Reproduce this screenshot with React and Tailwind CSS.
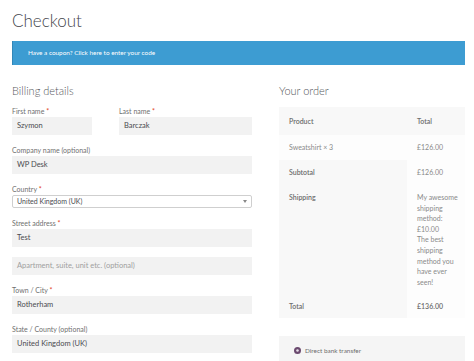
import React from 'react';

const Req = () => <span className="text-[#e2401c]">*</span>;

const Field = ({ label, required, value, placeholder }) => (
  <div className="flex flex-col">
    {label && (
      <label className="h-[10px] leading-[10px] text-[7px] text-[#707070]">
        {label}
        {required && <Req />}
      </label>
    )}
    <div
      className={`${label ? 'mt-[1px]' : ''} h-[18px] bg-[#f2f2f2] flex items-center px-[5px] text-[7.5px] ${
        value ? 'text-[#4a4b50]' : 'text-[#a0a0a0]'
      }`}
    >
      {value || placeholder}
    </div>
  </div>
);

const App = () => {
  const shipping = ['My awesome', 'shipping', 'method:', '£10.00', 'The best', 'shipping', 'method you', 'have ever', 'seen!'];

  return (
    <div className="w-[474px] h-[361px] overflow-hidden bg-white pl-[12px] pr-[9px] font-['Lato',sans-serif] text-[#43454b]">
      {/* Title */}
      <h1 className="mt-[9px] h-[24px] leading-[24px] text-[17px] font-light text-[#43454b]">Checkout</h1>

      {/* Coupon banner */}
      <div className="mt-[8px] h-[24px] bg-[#3d9cd2] border-l border-[#3287b8] flex items-center pl-[15px] text-[6.4px] text-white">
        Have a coupon? Click here to enter your code
      </div>

      <div className="mt-[18px] flex gap-[27px]">
        {/* Billing details */}
        <div className="w-[240px] flex flex-col">
          <h2 className="h-[16px] leading-[16px] text-[11px] font-light text-[#55575c]">Billing details</h2>
          <div className="mt-[7px] flex flex-col gap-[10px]">
            <div className="flex gap-[27px]">
              <div className="w-[80px]">
                <Field label="First name " required value="Szymon" />
              </div>
              <div className="flex-1">
                <Field label="Last name " required value="Barczak" />
              </div>
            </div>
            <Field label="Company name (optional)" value="WP Desk" />
            <div className="flex flex-col">
              <label className="h-[10px] leading-[10px] text-[7px] text-[#707070]">
                Country <Req />
              </label>
              <div className="mt-[1px] h-[13px] bg-white border border-[#cfcfcf] rounded-[2px] flex items-center justify-between px-[4px] text-[7px] text-[#4a4b50]">
                <span>United Kingdom (UK)</span>
                <span className="w-0 h-0 border-l-[2px] border-r-[2px] border-t-[3px] border-l-transparent border-r-transparent border-t-[#888]" />
              </div>
            </div>
            <Field label="Street address " required value="Test" />
            <Field placeholder="Apartment, suite, unit etc. (optional)" />
            <Field label="Town / City " required value="Rotherham" />
            <Field label="State / County (optional)" value="United Kingdom (UK)" />
          </div>
        </div>

        {/* Your order */}
        <div className="flex-1 flex flex-col">
          <h2 className="h-[16px] leading-[16px] text-[11px] font-light text-[#55575c]">Your order</h2>
          <table className="mt-[8px] w-full text-[7px] border-collapse">
            <thead>
              <tr className="bg-[#f8f8f8] h-[28px] text-[#6d6d6d]">
                <th className="w-[128px] pl-[10px] text-left font-semibold">Product</th>
                <th className="pl-[10px] text-left font-semibold">Total</th>
              </tr>
            </thead>
            <tbody>
              <tr className="h-[25px] bg-[#fdfdfd] text-[#8a8a8a]">
                <td className="pl-[10px]">Sweatshirt × 3</td>
                <td className="pl-[10px]">£126.00</td>
              </tr>
            </tbody>
            <tfoot>
              <tr className="h-[25px]">
                <th className="bg-[#f8f8f8] pl-[10px] text-left font-semibold text-[#6d6d6d]">Subtotal</th>
                <td className="bg-[#fdfdfd] pl-[10px] text-[#8a8a8a]">£126.00</td>
              </tr>
              <tr>
                <th className="bg-[#f8f8f8] pl-[10px] pt-[7px] align-top text-left font-semibold text-[#6d6d6d] leading-[10.6px]">
                  Shipping
                </th>
                <td className="bg-[#fdfdfd] pl-[10px] pr-[6px] pt-[7px] pb-[6px] text-[#8a8a8a] leading-[10.6px]">
                  {shipping.map((l, i) => (
                    <div key={i}>{l}</div>
                  ))}
                </td>
              </tr>
              <tr className="h-[25px]">
                <th className="bg-[#f8f8f8] pl-[10px] text-left font-semibold text-[#6d6d6d]">Total</th>
                <td className="bg-[#fdfdfd] pl-[10px] font-semibold text-[#6d6d6d]">£136.00</td>
              </tr>
            </tfoot>
          </table>

          {/* Payment */}
          <div className="mt-[18px] h-[40px] bg-[#f5f5f5] flex items-start pt-[10px] pl-[15px] text-[6.4px] text-[#6d6d6d]">
            <div className="flex items-center gap-[4px] h-[8px]">
              <svg width="7" height="7" viewBox="0 0 10 10">
                <circle cx="5" cy="5" r="5" fill="#6b4a6f" />
                <circle cx="5" cy="5" r="1.8" fill="#e8e0ea" />
              </svg>
              <span>Direct bank transfer</span>
            </div>
          </div>
        </div>
      </div>
    </div>
  );
};

export default App;
